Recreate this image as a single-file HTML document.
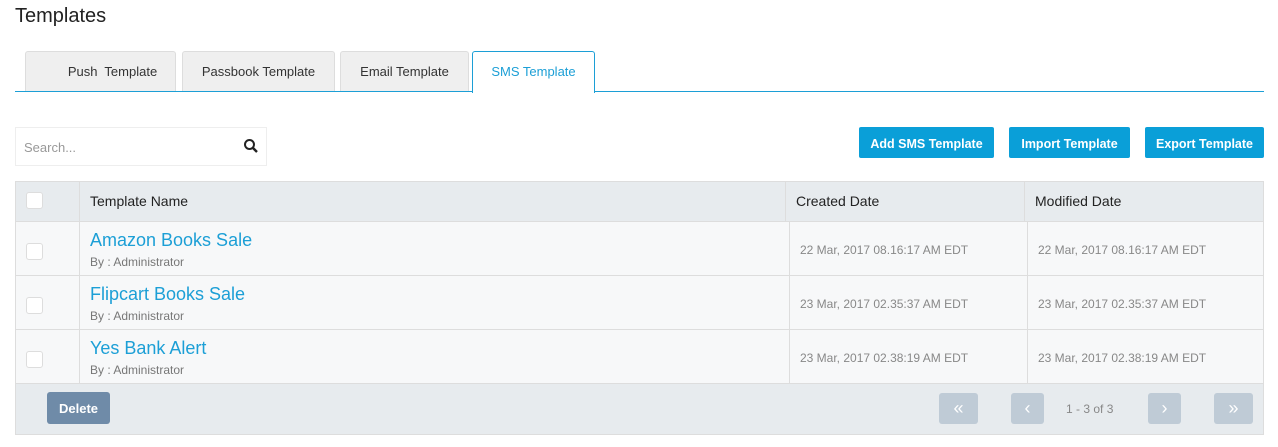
<!DOCTYPE html><html><head><style>
body{margin:0;width:1278px;height:447px;background:#fff;font-family:"Liberation Sans",sans-serif;position:relative;overflow:hidden}
.a{position:absolute;box-sizing:border-box}
.tab{top:51px;height:41px;background:#efefef;border:1px solid #ddd;border-bottom:none;border-radius:3px 3px 0 0;font-size:13px;color:#333;text-align:center;line-height:40px}
.btn{top:127px;height:31px;background:#0a9fd8;color:#fff;font-size:12.5px;font-weight:bold;text-align:center;line-height:34px;border-radius:2px}
.cb{width:17px;height:17px;border:1px solid #ddd;border-radius:3px;background:#fff;left:26px}
.pg{top:393px;height:31px;background:#bfcbd6;border-radius:3px;color:#fff;text-align:center;line-height:30px;font-size:18px}
.nm{font-size:18px;color:#1c9fd6;left:90px}
.by{font-size:12px;color:#777;left:90px}
.dt{font-size:12px;color:#888}
</style></head><body>
<div class="a" style="left:15px;top:5px;font-size:20px;color:#222">Templates</div>
<div class="a tab" style="left:25px;width:151px;padding-left:24px">Push&nbsp; Template</div>
<div class="a tab" style="left:182px;width:153px">Passbook Template</div>
<div class="a tab" style="left:340px;width:129px">Email Template</div>
<div class="a" style="left:15px;top:91px;width:1249px;height:1px;background:#1c9fd6"></div>
<div class="a tab" style="left:472px;width:123px;height:42px;background:#fff;border:1px solid #1c9fd6;border-bottom:none;color:#1c9fd6">SMS Template</div>
<div class="a" style="left:15px;top:127px;width:252px;height:39px;border:1px solid #eee;font-size:13px;color:#999;padding:12px 8px">Search...</div>
<svg class="a" style="left:243px;top:138px" width="16" height="16" viewBox="0 0 16 16"><circle cx="6.5" cy="6.5" r="4.5" fill="none" stroke="#222" stroke-width="2"/><path d="M10 10l4 4" stroke="#222" stroke-width="2.4"/></svg>
<div class="a btn" style="left:859px;width:135px">Add SMS Template</div>
<div class="a btn" style="left:1009px;width:121px">Import Template</div>
<div class="a btn" style="left:1145px;width:119px">Export Template</div>
<div class="a" style="left:15px;top:181px;width:1249px;height:254px;background:#f7f8f9;border:1px solid #ddd"></div>
<div class="a" style="left:15px;top:181px;width:1249px;height:41px;background:#e7ebee;border:1px solid #ddd"></div>
<div class="a" style="left:15px;top:383px;width:1249px;height:52px;background:#e7ebee;border:1px solid #ddd"></div>
<div class="a" style="left:15px;top:275px;width:1249px;height:1px;background:#ddd"></div>
<div class="a" style="left:15px;top:329px;width:1249px;height:1px;background:#ddd"></div>
<div class="a" style="left:79px;top:181px;width:1px;height:202px;background:#ddd"></div>
<div class="a" style="left:785px;top:181px;width:1px;height:41px;background:#ddd"></div>
<div class="a" style="left:1024px;top:181px;width:1px;height:41px;background:#ddd"></div>
<div class="a" style="left:789px;top:222px;width:1px;height:161px;background:#ddd"></div>
<div class="a" style="left:1027px;top:222px;width:1px;height:161px;background:#ddd"></div>
<div class="a cb" style="top:192px"></div>
<div class="a" style="left:90px;top:193px;font-size:14px;color:#222">Template Name</div>
<div class="a" style="left:796px;top:193px;font-size:14px;color:#222">Created Date</div>
<div class="a" style="left:1035px;top:193px;font-size:14px;color:#222">Modified Date</div>
<div class="a cb" style="top:243px"></div>
<div class="a nm" style="top:230px">Amazon Books Sale</div><div class="a by" style="top:255px">By : Administrator</div>
<div class="a dt" style="left:800px;top:243px">22 Mar, 2017 08.16:17 AM EDT</div><div class="a dt" style="left:1038px;top:243px">22 Mar, 2017 08.16:17 AM EDT</div>
<div class="a cb" style="top:297px"></div>
<div class="a nm" style="top:284px">Flipcart Books Sale</div><div class="a by" style="top:309px">By : Administrator</div>
<div class="a dt" style="left:800px;top:297px">23 Mar, 2017 02.35:37 AM EDT</div><div class="a dt" style="left:1038px;top:297px">23 Mar, 2017 02.35:37 AM EDT</div>
<div class="a cb" style="top:351px"></div>
<div class="a nm" style="top:338px">Yes Bank Alert</div><div class="a by" style="top:363px">By : Administrator</div>
<div class="a dt" style="left:800px;top:351px">23 Mar, 2017 02.38:19 AM EDT</div><div class="a dt" style="left:1038px;top:351px">23 Mar, 2017 02.38:19 AM EDT</div>
<div class="a" style="left:47px;top:392px;width:63px;height:32px;background:#6f8ba8;border-radius:3px;color:#fff;font-size:13px;font-weight:bold;text-align:center;line-height:34px">Delete</div>
<div class="a pg" style="left:939px;width:39px">«</div>
<div class="a pg" style="left:1011px;width:33px">‹</div>
<div class="a" style="left:1066px;top:402px;font-size:12px;color:#888">1 - 3 of 3</div>
<div class="a pg" style="left:1148px;width:33px">›</div>
<div class="a pg" style="left:1214px;width:39px">»</div>
</body></html>
